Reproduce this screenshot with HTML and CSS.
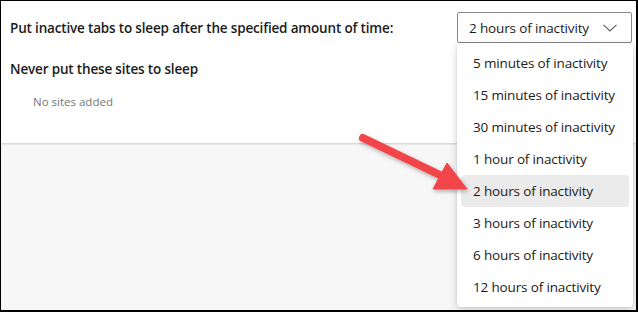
FILE: index.html
```html
<!DOCTYPE html>
<html>
<head>
<meta charset="utf-8">
<link rel="stylesheet" href="styles.css">
</head>
<body>
<div class="frame">
  <section class="card">
    <div class="row">
      <div class="label">Put inactive tabs to sleep after the specified amount of time:</div>
      <div class="select">
        <span>2 hours of inactivity</span>
        <svg class="chev" width="14" height="8" viewBox="0 0 14 8"><path d="M0.5 0.8 L7 7 L13.5 0.8" fill="none" stroke="#5f5f5f" stroke-width="1.1"/></svg>
      </div>
    </div>
    <div class="label second">Never put these sites to sleep</div>
    <div class="empty">No sites added</div>
  </section>
  <div class="rest"></div>
  <ul class="menu">
    <li>5 minutes of inactivity</li>
    <li>15 minutes of inactivity</li>
    <li>30 minutes of inactivity</li>
    <li>1 hour of inactivity</li>
    <li class="sel">2 hours of inactivity</li>
    <li>3 hours of inactivity</li>
    <li>6 hours of inactivity</li>
    <li>12 hours of inactivity</li>
  </ul>
  <svg class="arrow" width="638" height="312" viewBox="0 0 638 312">
    <defs>
      <filter id="sh" x="-20%" y="-20%" width="140%" height="140%">
        <feDropShadow dx="1" dy="2" stdDeviation="2" flood-color="#000" flood-opacity="0.3"/>
      </filter>
    </defs>
    <g filter="url(#sh)" fill="#f2444a" stroke="#f2444a">
      <line x1="363" y1="138" x2="440" y2="175" stroke-width="8" stroke-linecap="round"/>
      <polygon points="433,189 447,163 467,189" stroke-width="1" stroke-linejoin="round"/>
    </g>
  </svg>
</div>
</body>
</html>
```
FILE: styles.css
```css
html, body {
  margin: 0;
  padding: 0;
}
body {
  width: 638px;
  height: 312px;
  overflow: hidden;
  font-family: "Segoe UI", "Open Sans", "Noto Sans", sans-serif;
  color: #1b1b1b;
}
.frame {
  position: relative;
  box-sizing: border-box;
  width: 638px;
  height: 312px;
  border-style: solid;
  border-color: #000;
  border-width: 1px 2px 2px 1px;
  background: #f7f7f7;
  display: flex;
  flex-direction: column;
}
.card {
  background: #fff;
  height: 142px;
  box-sizing: border-box;
  padding: 11px 4px 0 9px;
  box-shadow: 0 1px 2px rgba(0,0,0,0.18);
}
.row {
  display: flex;
  align-items: center;
  justify-content: space-between;
}
.label {
  font-size: 13.5px;
  line-height: 20px;
  font-weight: 600;
  letter-spacing: -0.17px;
}
.second {
  margin-top: 16px;
}
.empty {
  margin-top: 15px;
  padding-left: 23px;
  font-size: 11.5px;
  line-height: 16px;
  color: #767676;
}
.select {
  box-sizing: border-box;
  width: 175px;
  height: 31px;
  border: 1px solid #8a8a8a;
  border-radius: 2px;
  display: flex;
  align-items: center;
  justify-content: space-between;
  padding: 0 14px 0 11px;
  font-size: 13.5px;
  letter-spacing: -0.15px;
}
.chev {
  display: block;
}
.menu {
  position: absolute;
  left: 456px;
  top: 42px;
  width: 176px;
  box-sizing: border-box;
  margin: 0;
  padding: 4px;
  list-style: none;
  background: #fff;
  border-radius: 4px;
  box-shadow: 0 3px 8px rgba(0,0,0,0.18), 0 0 2px rgba(0,0,0,0.12);
}
.menu li {
  height: 32px;
  line-height: 32px;
  padding-left: 12px;
  font-size: 13.5px;
  letter-spacing: -0.15px;
  border-radius: 4px;
  white-space: nowrap;
}
.menu li.sel {
  background: #ebebeb;
}
.arrow {
  position: absolute;
  left: -1px;
  top: -1px;
  pointer-events: none;
}
```
